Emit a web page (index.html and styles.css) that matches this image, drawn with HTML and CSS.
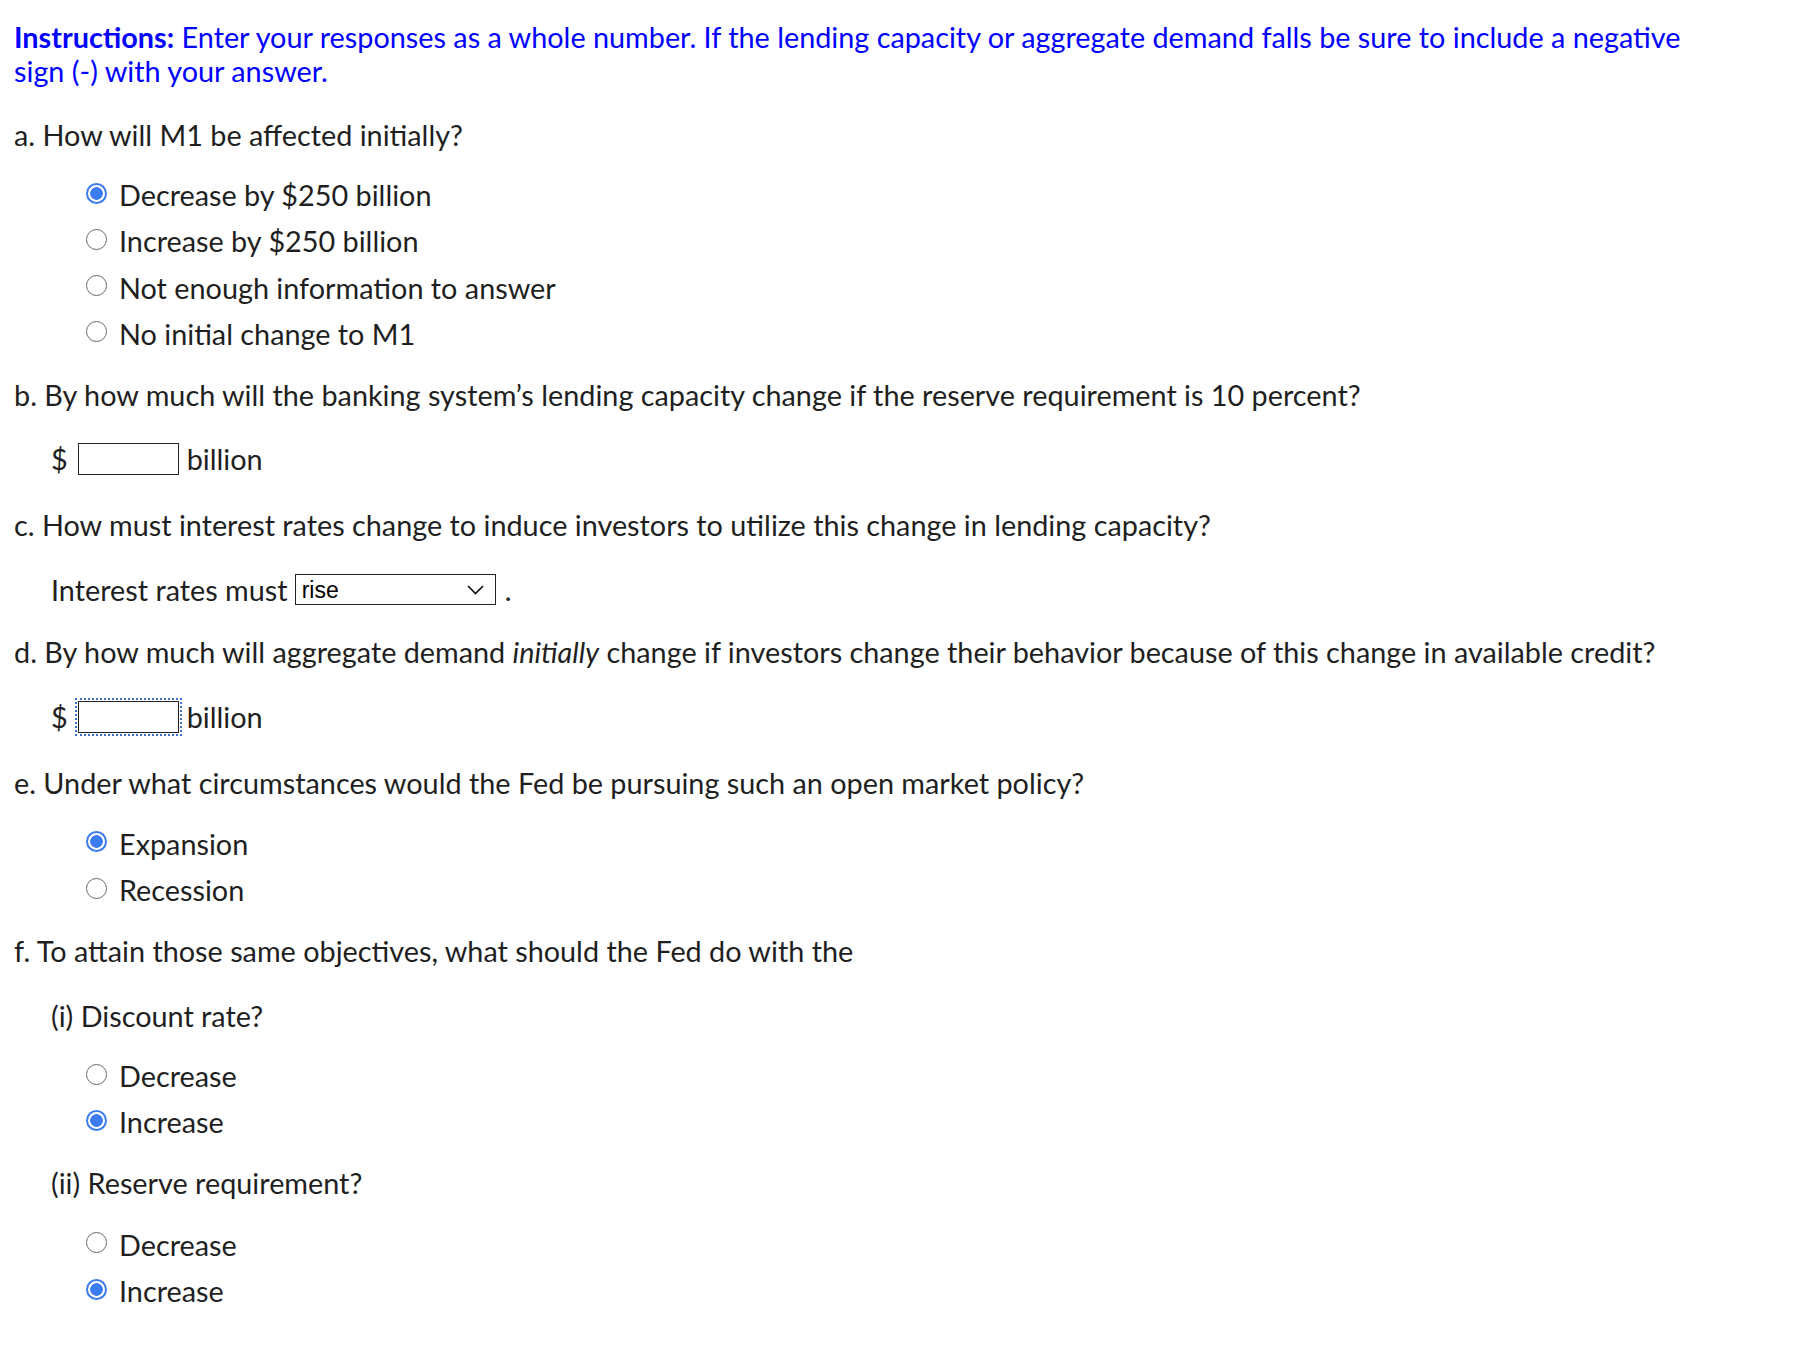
FILE: index.html
```html
<!DOCTYPE html>
<html>
<head>
<meta charset="utf-8">
<link rel="stylesheet" href="styles.css">
</head>
<body>
<div class="page">
  <p class="instr"><b>Instructions:</b> Enter your responses as a whole number. If the lending capacity or aggregate demand falls be sure to include a negative sign (-) with your answer.</p>

  <p class="q">a. How will M1 be affected initially?</p>
  <ul class="opts">
    <li><input type="radio" name="a" checked><span>Decrease by $250 billion</span></li>
    <li><input type="radio" name="a"><span>Increase by $250 billion</span></li>
    <li><input type="radio" name="a"><span>Not enough information to answer</span></li>
    <li><input type="radio" name="a"><span>No initial change to M1</span></li>
  </ul>

  <p class="q q-after">b. By how much will the banking system’s lending capacity change if the reserve requirement is 10 percent?</p>
  <div class="sub ans"><span>$</span><input class="num" type="text"><span class="unit">billion</span></div>

  <p class="q q-c">c. How must interest rates change to induce investors to utilize this change in lending capacity?</p>
  <div class="sub sel-row"><span>Interest rates must</span><span class="sel-wrap"><select class="sel"><option>rise</option><option>fall</option></select><svg class="chev" width="17" height="10" viewBox="0 0 17 10"><path d="M1 1 L8.5 8.5 L16 1" fill="none" stroke="#111" stroke-width="1.7"/></svg></span><span class="dot">.</span></div>

  <p class="q q-d">d. By how much will aggregate demand <i>initially</i> change if investors change their behavior because of this change in available credit?</p>
  <div class="sub ans"><span>$</span><span class="focus"><input class="num" type="text"></span><span class="unit">billion</span></div>

  <p class="q q-e">e. Under what circumstances would the Fed be pursuing such an open market policy?</p>
  <ul class="opts">
    <li><input type="radio" name="e" checked><span>Expansion</span></li>
    <li><input type="radio" name="e"><span>Recession</span></li>
  </ul>

  <p class="q q-after">f. To attain those same objectives, what should the Fed do with the</p>
  <p class="sub subq">(i) Discount rate?</p>
  <ul class="opts">
    <li><input type="radio" name="f1"><span>Decrease</span></li>
    <li><input type="radio" name="f1" checked><span>Increase</span></li>
  </ul>
  <p class="sub subq q-after">(ii) Reserve requirement?</p>
  <ul class="opts opts-last">
    <li><input type="radio" name="f2"><span>Decrease</span></li>
    <li><input type="radio" name="f2" checked><span>Increase</span></li>
  </ul>
</div>
</body>
</html>
```
FILE: styles.css
```css
html, body {
  margin: 0;
  padding: 0;
  background: #fff;
}
body {
  font-family: Lato, "Noto Sans", sans-serif;
  font-size: 28.8px;
  color: #1f1f1f;
}
.page {
  padding: 20px 0 0 14px;
  max-width: 1715px;
}
p { margin: 0; }
.instr {
  color: #0000ff;
  line-height: 34px;
}
.instr b { font-weight: 700; }
.q {
  line-height: 34px;
  margin-top: 29.5px;
}
.q-after { margin-top: 27px; }
.q-c { margin-top: 32px; }
.q-d { margin-top: 28.5px; }
.q-e { margin-top: 32.5px; }
.opts {
  list-style: none;
  margin: 26.5px 0 0 0;
  padding: 0 0 0 72px;
  display: flex;
  flex-direction: column;
  gap: 12.3px;
}
.opts-last { margin-top: 27.5px; }
.opts li {
  display: flex;
  align-items: center;
  height: 34px;
}
.opts input[type=radio] {
  appearance: none;
  -webkit-appearance: none;
  box-sizing: border-box;
  width: 21px;
  height: 21px;
  margin: 0 12px 0 0;
  border: 1.6px solid #6a6a6a;
  border-radius: 50%;
  background: #fff;
  flex: none;
  position: relative;
  top: -2px;
}
.opts input[type=radio]:checked {
  border: 2px solid #3b7cf0;
  background: radial-gradient(circle, #3b7cf0 0 6px, #fff 6.6px);
}
.sub {
  padding-left: 37px;
  line-height: 34px;
  margin-top: 30.5px;
}
.subq { margin-top: 30.5px; }
.q-after.subq { margin-top: 27px; }
.ans {
  display: flex;
  align-items: center;
  height: 34px;
}
.num {
  box-sizing: border-box;
  width: 101px;
  height: 32px;
  margin: 0 0 0 10px;
  border: 1px solid #222;
  border-radius: 0;
  padding: 0 4px;
  font: 20px "Liberation Sans", sans-serif;
  background: #fff;
}
.focus {
  display: inline-flex;
  margin-left: 10px;
  outline: 2px dotted #3f6fcf;
  outline-offset: 1px;
}
.focus .num { margin: 0; }
.unit { margin-left: 8px; }
.sel-row {
  display: flex;
  align-items: center;
  height: 34px;
}
.sel-wrap {
  position: relative;
  display: inline-flex;
  margin-left: 7px;
}
.sel {
  appearance: none;
  -webkit-appearance: none;
  box-sizing: border-box;
  width: 201px;
  height: 31px;
  border: 1px solid #222;
  border-radius: 0;
  background: #fff;
  color: #000;
  font: 23px "Liberation Sans", Arial, sans-serif;
  padding: 0 0 0 6px;
  margin: 0;
}
.chev {
  position: absolute;
  right: 12px;
  top: 11px;
  pointer-events: none;
}
.dot { margin-left: 9px; }
```
